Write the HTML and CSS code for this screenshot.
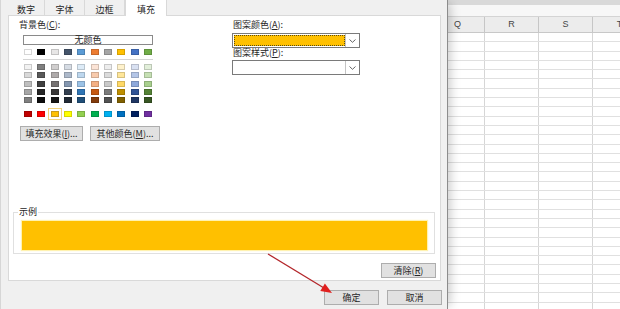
FILE: index.html
```html
<!DOCTYPE html>
<html lang="zh-CN">

<head>
	<title>设置单元格格式 - 填充</title>
	<meta charset="UTF-8">
	<meta name="viewport" content="width=device-width, initial-scale=1.0">
	<link rel="stylesheet" href="styles.css">
</head>

<body>
	<div class="dialog">
		<div class="tabs">
			<div class="tab tab-1">数字</div>
			<div class="tab">字体</div>
			<div class="tab">边框</div>
			<div class="tab active">填充</div>
		</div>
		<div class="panel">
			<div class="columns">
				<div class="col-left">
					<div class="label">背景色(<u>C</u>):</div>
					<div class="no-color">无颜色</div>
					<div class="swatches" id="theme-colors"></div>
					<div class="sep"></div>
					<div class="swatches shades" id="shade-colors"></div>
					<div class="swatches standard" id="standard-colors"></div>
					<div class="btn-row">
						<button class="btn btn-effects">填充效果(<u>I</u>)...</button>
						<button class="btn btn-more">其他颜色(<u>M</u>)...</button>
					</div>
				</div>
				<div class="col-right">
					<div class="label">图案颜色(<u>A</u>):</div>
					<div class="select">
						<div class="select-value"><div class="fill"></div></div>
						<div class="select-arrow">
							<svg width="7" height="4" viewBox="0 0 7 4"><polyline points="0.5,0.5 3.5,3.3 6.5,0.5" fill="none" stroke="#555" stroke-width="0.9"/></svg>
						</div>
					</div>
					<div class="label">图案样式(<u>P</u>):</div>
					<div class="select select-2">
						<div class="select-value"></div>
						<div class="select-arrow">
							<svg width="7" height="4" viewBox="0 0 7 4"><polyline points="0.5,0.5 3.5,3.3 6.5,0.5" fill="none" stroke="#555" stroke-width="0.9"/></svg>
						</div>
					</div>
				</div>
			</div>
			<fieldset class="sample">
				<legend>示例</legend>
				<div class="sample-fill"></div>
			</fieldset>
			<div class="clear-row">
				<button class="btn btn-clear">清除(<u>R</u>)</button>
			</div>
		</div>
		<div class="footer">
			<button class="btn btn-ok">确定</button>
			<button class="btn btn-cancel">取消</button>
		</div>
	</div>

	<div class="sheet">
		<div class="sheet-top"></div>
		<div class="sheet-bar"></div>
		<div class="sheet-grid">
			<div class="row head">
				<div class="cell">Q</div>
				<div class="cell">R</div>
				<div class="cell">S</div>
				<div class="cell">T</div>
			</div>
			<div id="sheet-rows"></div>
		</div>
	</div>

	<svg class="arrow" width="620" height="309" viewBox="0 0 620 309">
		<line x1="268" y1="254" x2="324" y2="288" stroke="#b3262a" stroke-width="1.3"/>
		<polygon points="332,293 320.3,291 324.9,283.6" fill="#e0201f"/>
	</svg>

	<script>
		const theme = ['#FFFFFF', '#000000', '#E7E6E6', '#44546A', '#5B9BD5', '#ED7D31', '#A5A5A5', '#FFC000', '#4472C4', '#70AD47'];
		const shades = [
			'#F2F2F2', '#7F7F7F', '#D0CECE', '#D6DCE4', '#DDEBF7', '#FCE4D6', '#EDEDED', '#FFF2CC', '#D9E1F2', '#E2EFDA',
			'#D9D9D9', '#595959', '#AEAAAA', '#ADB9CA', '#BDD7EE', '#F8CBAD', '#DBDBDB', '#FFE699', '#B4C6E7', '#C6E0B4',
			'#BFBFBF', '#404040', '#757171', '#8497B0', '#9BC2E6', '#F4B084', '#C9C9C9', '#FFD966', '#8EA9DB', '#A9D08E',
			'#A6A6A6', '#262626', '#3A3838', '#333F4F', '#2F75B5', '#C65911', '#7B7B7B', '#BF8F00', '#305496', '#548235',
			'#808080', '#0D0D0D', '#171616', '#222A35', '#1F4E78', '#833C0C', '#525252', '#806000', '#203764', '#375623'
		];
		const standard = ['#C00000', '#FF0000', '#FFC000', '#FFFF00', '#92D050', '#00B050', '#00B0F0', '#0070C0', '#002060', '#7030A0'];

		// Build one block of colour swatches
		function fillSwatches(id, colors, selected) {
			const box = document.getElementById(id);
			colors.forEach((color, i) => {
				const sw = document.createElement('div');
				sw.className = 'swatch' + (i === selected ? ' selected' : '');
				sw.style.background = color;
				box.appendChild(sw);
			});
		}

		fillSwatches('theme-colors', theme, -1);
		fillSwatches('shade-colors', shades, -1);
		fillSwatches('standard-colors', standard, 2);

		// Empty worksheet rows behind the dialog
		const rows = document.getElementById('sheet-rows');
		for (let r = 0; r < 30; r++) {
			const row = document.createElement('div');
			row.className = 'row';
			row.innerHTML = '<div class="cell"></div><div class="cell"></div><div class="cell"></div><div class="cell"></div>';
			rows.appendChild(row);
		}
	</script>
</body>

</html>
```

FILE: styles.css
```css
* {
	box-sizing: border-box;
}

body {
	margin: 0;
	width: 620px;
	height: 309px;
	overflow: hidden;
	display: flex;
	font-family: "Noto Sans CJK SC", "Noto Sans", sans-serif;
	font-size: 9px;
	color: #262626;
	background: #fff;
}

u {
	text-decoration: underline;
	text-underline-offset: 1px;
}

/* dialog */

.dialog {
	position: relative;
	z-index: 1;
	width: 448px;
	height: 309px;
	flex-shrink: 0;
	display: flex;
	flex-direction: column;
	padding: 0 6px 0 7px;
	background: #f0f0f0;
	border-left: 1px solid #d6d6d6;
	border-right: 1px solid #8c8c8c;
	box-shadow: 5px 0 10px -3px rgba(0, 0, 0, 0.22);
}

.tabs {
	display: flex;
	height: 15px;
}

.tab {
	width: 40px;
	padding-top: 5px;
	line-height: 10px;
	text-align: center;
	border-right: 1px solid #d9d9d9;
}

.tab-1 {
	width: 37px;
}

.tab.active {
	position: relative;
	z-index: 1;
	width: 42px;
	height: 16px;
	background: #fff;
	border: 1px solid #d9d9d9;
	border-bottom: none;
	border-top: none;
}

.panel {
	height: 266px;
	display: flex;
	flex-direction: column;
	padding: 4px 0 2px 0;
	background: #fff;
	border: 1px solid #d9d9d9;
}

.columns {
	display: flex;
}

.col-left {
	width: 223px;
	padding-left: 10px;
}

.col-right {
	width: 128px;
}

.label {
	line-height: 10px;
	height: 10px;
	padding-left: 1px;
}

.col-left .label {
	padding-left: 0;
}

.no-color {
	width: 130px;
	height: 10px;
	margin: 5px 0 0 4px;
	line-height: 8px;
	text-align: center;
	background: #fff;
	border: 1px solid #8a8a8a;
}

.swatches {
	display: grid;
	grid-template-columns: repeat(10, 8px);
	grid-auto-rows: 6px;
	column-gap: 5.33px;
	margin: 4px 0 0 5px;
}

.shades {
	row-gap: 2.3px;
	margin-top: 4px;
}

.standard {
	margin-top: 7.8px;
}

.swatch {
	box-shadow: inset 0 0 0 1px rgba(0, 0, 0, 0.16);
}

.swatch.selected {
	outline: 1px solid #f2d27a;
	outline-offset: 2px;
	box-shadow: inset 0 0 0 1px #c99a1a;
}

.sep {
	width: 130px;
	height: 1px;
	margin: 4px 0 0 4px;
	background: #d4d4d4;
}

.btn-row {
	display: flex;
	gap: 7px;
	margin: 9px 0 0 1px;
}

.btn {
	height: 15px;
	padding: 0;
	font-family: inherit;
	font-size: 9px;
	line-height: 13px;
	color: #262626;
	background: #e1e1e1;
	border: 1px solid #adadad;
}

.btn-effects {
	width: 63px;
}

.btn-more {
	width: 70px;
}

.select {
	display: flex;
	height: 15px;
	margin-top: 3px;
	background: #fff;
	border: 1px solid #7a7a7a;
}

.select-2 {
	margin-top: 2px;
}

.select-value {
	flex: 1;
	padding: 1px 0 1px 1px;
}

.fill {
	height: 100%;
	background: #ffc000;
	border: 1px dotted #5a4a10;
}

.select-arrow {
	width: 14px;
	display: flex;
	align-items: center;
	justify-content: center;
	border-left: 1px solid #c4c4c4;
}

.sample {
	margin: auto 5px 0 4px;
	padding: 4px 7px 3px 8px;
	border: 1px solid #e0e0e0;
	min-width: 0;
}

.sample legend {
	margin-left: -4px;
	padding: 0 1px;
	line-height: 10px;
}

.sample-fill {
	height: 29px;
	background: #ffc000;
	box-shadow: 0 0 1px 1px #fff2b0;
}

.clear-row {
	display: flex;
	justify-content: flex-end;
	margin-top: 9px;
	padding-right: 4px;
}

.btn-clear {
	width: 55px;
}

.footer {
	display: flex;
	justify-content: flex-end;
	gap: 8px;
	padding-top: 9px;
	margin-right: -1px;
}

.btn-ok,
.btn-cancel {
	width: 55px;
}

/* worksheet */

.sheet {
	flex: 1;
	overflow: hidden;
	background: #fff;
}

.sheet-top {
	height: 5px;
	background: #d9d9d9;
}

.sheet-bar {
	height: 12px;
	background: #f7f7f7;
	border-bottom: 1px solid #d4d4d4;
}

.sheet-grid {
	margin-left: -17px;
	width: 240px;
}

.row {
	display: flex;
	height: 9.3px;
	border-bottom: 1px solid #e0e0e0;
}

.cell {
	width: 54px;
	flex-shrink: 0;
	border-right: 1px solid #d6d6d6;
}

.row.head {
	height: 16px;
	background: #ececec;
	border-bottom: 1px solid #c8c8c8;
}

.row.head .cell {
	line-height: 15px;
	text-align: center;
	color: #444;
	font-family: "Liberation Sans", sans-serif;
	border-right-color: #c6c6c6;
}

.arrow {
	position: absolute;
	top: 0;
	left: 0;
	z-index: 2;
	pointer-events: none;
}
```
